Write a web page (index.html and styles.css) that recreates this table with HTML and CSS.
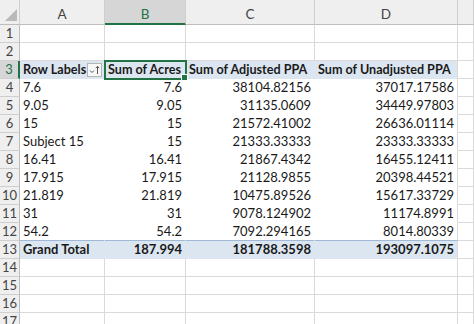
FILE: index.html
```html
<!DOCTYPE html>
<html lang="en">

<head>
  <meta charset="UTF-8" />
  <title>Pivot - Acres</title>
  <link rel="stylesheet" href="styles.css">
</head>

<body>
  <div class="sheet">
    <!-- column headers -->
    <div class="hd corner"><span class="tri"></span></div>
    <div class="hd">A</div>
    <div class="hd sel">B</div>
    <div class="hd">C</div>
    <div class="hd">D</div>
    <div class="hd"></div>

    <div class="rh">1</div><div class="c"></div><div class="c"></div><div class="c"></div><div class="c"></div><div class="c"></div>
    <div class="rh">2</div><div class="c"></div><div class="c"></div><div class="c"></div><div class="c"></div><div class="c"></div>

    <div class="rh rsel">3</div>
    <div class="c pv ph lbl">
      <span>Row Labels</span>
      <svg class="filter" width="15" height="14" viewBox="0 0 15 14">
        <rect x="0.5" y="0.5" width="14" height="13" fill="#f7f7f7" stroke="#b4b4b4" />
        <path d="M3 7.5 L5 9.5 L7 7.5" fill="none" stroke="#555" stroke-width="1" />
        <path d="M10.5 11 V3.5 M8.8 5.2 L10.5 3.3 L12.2 5.2" fill="none" stroke="#555" stroke-width="1" />
      </svg>
    </div>
    <div class="c pv ph active">Sum of Acres</div>
    <div class="c pv ph">Sum of Adjusted PPA</div>
    <div class="c pv ph last">Sum of Unadjusted PPA</div>
    <div class="c"></div>

    <div class="rh">4</div><div class="c pv">7.6</div><div class="c pv num">7.6</div><div class="c pv num">38104.82156</div><div class="c pv num last">37017.17586</div><div class="c"></div>
    <div class="rh">5</div><div class="c pv">9.05</div><div class="c pv num">9.05</div><div class="c pv num">31135.0609</div><div class="c pv num last">34449.97803</div><div class="c"></div>
    <div class="rh">6</div><div class="c pv">15</div><div class="c pv num">15</div><div class="c pv num">21572.41002</div><div class="c pv num last">26636.01114</div><div class="c"></div>
    <div class="rh">7</div><div class="c pv">Subject 15</div><div class="c pv num">15</div><div class="c pv num">21333.33333</div><div class="c pv num last">23333.33333</div><div class="c"></div>
    <div class="rh">8</div><div class="c pv">16.41</div><div class="c pv num">16.41</div><div class="c pv num">21867.4342</div><div class="c pv num last">16455.12411</div><div class="c"></div>
    <div class="rh">9</div><div class="c pv">17.915</div><div class="c pv num">17.915</div><div class="c pv num">21128.9855</div><div class="c pv num last">20398.44521</div><div class="c"></div>
    <div class="rh">10</div><div class="c pv">21.819</div><div class="c pv num">21.819</div><div class="c pv num">10475.89526</div><div class="c pv num last">15617.33729</div><div class="c"></div>
    <div class="rh">11</div><div class="c pv">31</div><div class="c pv num">31</div><div class="c pv num">9078.124902</div><div class="c pv num last">11174.8991</div><div class="c"></div>
    <div class="rh">12</div><div class="c pv pre">54.2</div><div class="c pv num pre">54.2</div><div class="c pv num pre">7092.294165</div><div class="c pv num last pre">8014.80339</div><div class="c"></div>

    <div class="rh">13</div><div class="c pv tot">Grand Total</div><div class="c pv tot num">187.994</div><div class="c pv tot num">181788.3598</div><div class="c pv tot num last">193097.1075</div><div class="c"></div>

    <div class="rh">14</div><div class="c"></div><div class="c"></div><div class="c"></div><div class="c"></div><div class="c"></div>
    <div class="rh">15</div><div class="c"></div><div class="c"></div><div class="c"></div><div class="c"></div><div class="c"></div>
    <div class="rh">16</div><div class="c"></div><div class="c"></div><div class="c"></div><div class="c"></div><div class="c"></div>
    <div class="rh">17</div><div class="c"></div><div class="c"></div><div class="c"></div><div class="c"></div><div class="c"></div>
  </div>
</body>

</html>
```

FILE: styles.css
```css
:root {
  --grid: #dadada;
  --head-bg: #efefef;
  --head-line: #cfcfcf;
  --green: #217346;
  --pivot: #dce6f1;
}

body {
  margin: 0;
  overflow: hidden;
  background: #ffffff;
  font-family: 'Lato', 'Liberation Sans', sans-serif;
  font-size: 13px;
  color: #1a1a1a;
}

.sheet {
  display: grid;
  grid-template-columns: 20px 85px 81px 129px 143px 16px;
  grid-template-rows: 25px;
  grid-auto-rows: 18px;
}

.sheet > div {
  box-sizing: border-box;
}

/* headers */
.hd {
  background: var(--head-bg);
  border-right: 1px solid var(--head-line);
  border-bottom: 1px solid #bdbdbd;
  color: #444;
  text-align: center;
  font-size: 13.5px;
  padding-top: 6px;
  line-height: 17px;
}

.hd.sel {
  background: #d6d6d6;
  color: var(--green);
  border-bottom: 2px solid var(--green);
}

.corner {
  position: relative;
}

.corner .tri {
  position: absolute;
  right: 2px;
  bottom: 3px;
  width: 0;
  height: 0;
  border-left: 12px solid transparent;
  border-bottom: 12px solid #b9b9b9;
}

.rh {
  background: var(--head-bg);
  border-right: 1px solid #bdbdbd;
  border-bottom: 1px solid var(--head-line);
  color: #444;
  text-align: center;
  font-size: 13px;
  line-height: 17px;
}

.rh.rsel {
  background: #d6d6d6;
  color: var(--green);
  border-right: 2px solid var(--green);
}

/* cells */
.c {
  border-right: 1px solid var(--grid);
  border-bottom: 1px solid var(--grid);
  padding: 0 3px;
  line-height: 17px;
  white-space: nowrap;
}

.pv {
  background: #ffffff;
  border-right-color: transparent;
  border-bottom-color: transparent;
}

.pv.last {
  border-right-color: var(--grid);
}

.num {
  text-align: right;
}

.ph {
  background: var(--pivot);
  font-weight: 700;
  font-size: 12.6px;
}

.lbl {
  display: flex;
  align-items: center;
  justify-content: space-between;
  padding-right: 2px;
}

.filter {
  display: block;
  flex-shrink: 0;
}

.active {
  position: relative;
  outline: 2px solid var(--green);
  outline-offset: -1px;
  border-right-color: transparent;
}

.active::after {
  content: "";
  position: absolute;
  right: -3px;
  bottom: -3px;
  width: 5px;
  height: 5px;
  background: var(--green);
  border: 1px solid #ffffff;
}

.pre {
  border-bottom-color: #9fb8d8;
}

.tot {
  background: var(--pivot);
  font-weight: 700;
}
```
